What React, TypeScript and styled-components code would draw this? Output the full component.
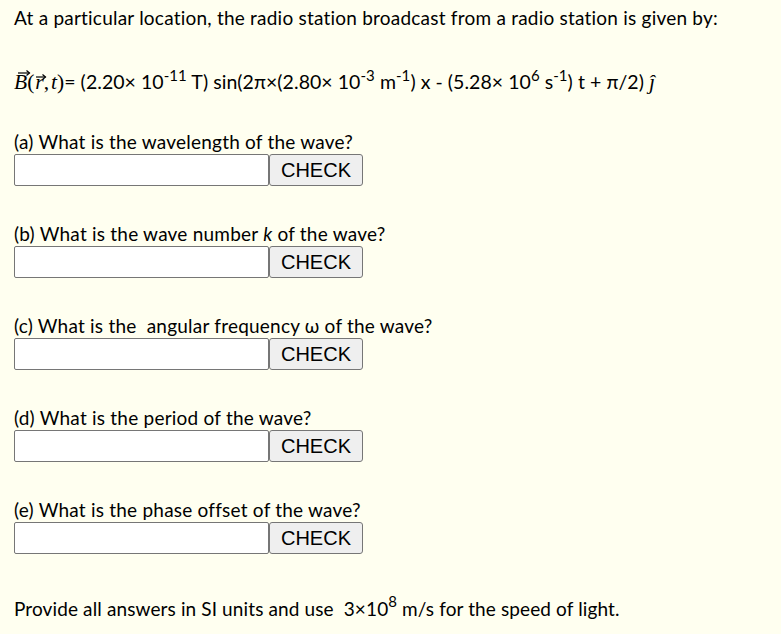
import React from "react";
import styled, { createGlobalStyle } from "styled-components";

const Global = createGlobalStyle`
  html, body { margin: 0; padding: 0; background: #fffff0; }
  body { font-family: Lato, "Open Sans", sans-serif; color: #000; }
`;

const Page = styled.div`
  display: flex;
  flex-direction: column;
  padding: 7px 14px 20px 14px;
  font-size: 19px;
  letter-spacing: 0.22px;
  line-height: 22px;
`;

const Para = styled.p<{ $top?: number }>`
  margin: ${(p) => p.$top ?? 0}px 0 0 0;
  white-space: nowrap;
`;

const Formula = styled(Para)`
  font-size: 19.5px;
  letter-spacing: 0.05px;
`;

const MathVar = styled.span`
  font-family: "Liberation Serif", "DejaVu Serif", serif;
  font-style: italic;
  font-size: 21.5px;
  letter-spacing: 0;
`;

const Upright = styled.span<{ $pad?: number }>`
  font-style: normal;
  padding-right: ${(p) => p.$pad ?? 0}px;
`;

const VecBox = styled.span`
  position: relative;
  display: inline-block;
`;

const VecArrow = styled.svg<{ $left: number; $top: number; $w: number }>`
  position: absolute;
  left: ${(p) => p.$left}px;
  top: ${(p) => p.$top}px;
  width: ${(p) => p.$w}px;
  height: 6px;
  overflow: visible;
`;

const Vec: React.FC<{ children: React.ReactNode; left: number; top: number; w: number }> = ({
  children,
  left,
  top,
  w,
}) => (
  <VecBox>
    {children}
    <VecArrow $left={left} $top={top} $w={w} viewBox={`0 0 ${w} 6`}>
      <line x1="0" y1="3" x2={w - 0.5} y2="3" stroke="#000" strokeWidth="1.2" />
      <polyline points={`${w - 3.5},0.5 ${w - 0.5},3 ${w - 3.5},5.5`} fill="none" stroke="#000" strokeWidth="1.2" />
    </VecArrow>
  </VecBox>
);

const Sup = styled.sup<{ $raise?: number }>`
  font-size: 15px;
  line-height: 0;
  vertical-align: ${(p) => p.$raise ?? 8}px;
`;

const Questions = styled.div`
  display: flex;
  flex-direction: column;
  gap: 37px;
  margin-top: 38px;
`;

const Question = styled.div`
  display: flex;
  flex-direction: column;
  gap: 1px;
`;

const Row = styled.div`
  display: flex;
  align-items: stretch;
  height: 32px;
`;

const Input = styled.input`
  box-sizing: border-box;
  width: 255px;
  height: 32px;
  margin: 0;
  border: 1px solid #767676;
  border-radius: 2px;
  background: #fff;
  padding: 1px 2px;
`;

const Button = styled.button`
  box-sizing: border-box;
  width: 94px;
  height: 32px;
  margin: 0;
  border: 1px solid #767676;
  border-radius: 3px;
  background: #efefef;
  font-family: "Liberation Sans", Arial, sans-serif;
  font-size: 20px;
  letter-spacing: 0;
  color: #000;
  padding: 0;
`;

const Footer = styled.p`
  margin: 44px 0 0 0;
  white-space: nowrap;
  letter-spacing: 0.12px;
`;

const questions: React.ReactNode[] = [
  <>(a) What is the wavelength of the wave?</>,
  <>
    (b) What is the wave number <i>k</i> of the wave?
  </>,
  <>(c) What is the&nbsp; angular frequency ω of the wave?</>,
  <>(d) What is the period of the wave?</>,
  <>(e) What is the phase offset of the wave?</>,
];

export default function App() {
  return (
    <>
      <Global />
      <Page>
        <Para>
          At a particular location, the radio station broadcast from a radio station is given by:
        </Para>
        <Formula $top={42}>
          <MathVar>
            <Vec left={4} top={-1} w={12}>B</Vec>
            <Upright $pad={1}>(</Upright>
            <Vec left={1} top={3} w={10}>r</Vec>
            <Upright $pad={2}>,</Upright>t<Upright>)</Upright>
          </MathVar>
          = (2.20× 10<Sup>-11</Sup> T) sin(2π×(2.80× 10<Sup>-3</Sup> m<Sup>-1</Sup>) x - (5.28× 10
          <Sup>6</Sup> s<Sup>-1</Sup>) t + π/2){" "}
          <MathVar>ĵ</MathVar>
        </Formula>
        <Questions>
          {questions.map((q, i) => (
            <Question key={i}>
              <div>{q}</div>
              <Row>
                <Input type="text" />
                <Button>CHECK</Button>
              </Row>
            </Question>
          ))}
        </Questions>
        <Footer>
          Provide all answers in SI units and use&nbsp; 3×10<Sup $raise={9}>8</Sup> m/s for the speed of light.
        </Footer>
      </Page>
    </>
  );
}
